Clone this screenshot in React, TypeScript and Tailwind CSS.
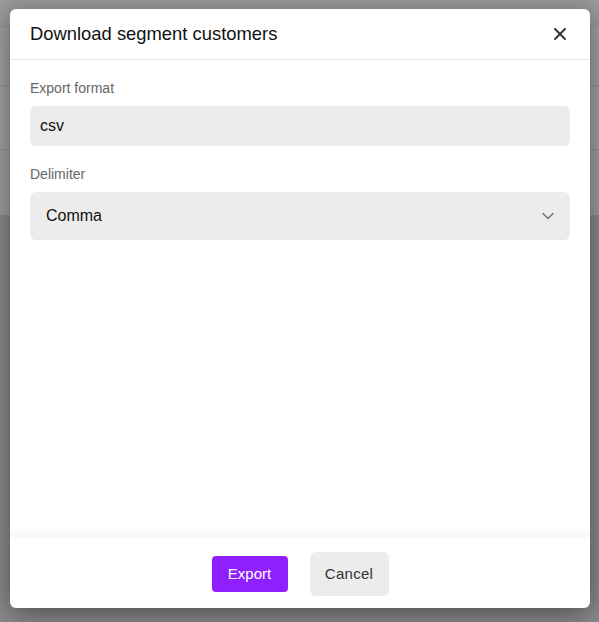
import { X, ChevronDown } from "lucide-react";

export default function App() {
  return (
    <div className="relative h-[622px] w-full overflow-hidden bg-[#8b8b8b] font-['Liberation_Sans',Arial,sans-serif]">
      {/* dimmed page underneath */}
      <div className="flex flex-col">
        <div className="h-[28px] bg-[#9b9b9b]" />
        <div className="h-[58px] border-b border-[#8f8f8f] bg-[#a2a2a2]" />
        <div className="h-[64px] border-b border-[#8f8f8f] bg-[#a2a2a2]" />
        <div className="h-[65px] bg-[#9f9f9f]" />
      </div>

      {/* dialog */}
      <div className="absolute left-[10px] top-[9px] flex h-[599px] w-[580px] flex-col overflow-hidden rounded-md bg-white shadow-[0_6px_28px_rgba(0,0,0,0.45)]">
        <div className="flex h-[51px] items-center justify-between border-b border-[#e6e6e6] px-5">
          <h2 className="text-[18.4px] text-[#111]">Download segment customers</h2>
          <button className="text-[#333]">
            <X size={20} strokeWidth={2.4} />
          </button>
        </div>

        <div className="flex flex-1 flex-col px-5 pt-[18px]">
          <label className="text-[14px] leading-5 text-[#666]">Export format</label>
          <div className="mt-2 flex h-10 items-center rounded-md bg-[#ececec] px-[10px] text-[16px] text-[#111]">
            csv
          </div>

          <label className="mt-[18px] text-[14px] leading-5 text-[#666]">Delimiter</label>
          <div className="mt-2 flex h-12 items-center justify-between rounded-md bg-[#ececec] pl-4 pr-3 text-[16px] text-[#111]">
            <span>Comma</span>
            <ChevronDown size={20} strokeWidth={1.9} className="text-[#777]" />
          </div>
        </div>

        <div className="flex h-[70px] items-center justify-center gap-[22px] pt-[2px] shadow-[0_-5px_8px_rgba(0,0,0,0.045)]">
          <button className="h-9 w-[76px] rounded bg-[#8f1fff] text-[15px] text-white">
            Export
          </button>
          <button className="h-11 w-[79px] rounded-md bg-[#ececec] text-[15px] tracking-[0.3px] text-[#333]">
            Cancel
          </button>
        </div>
      </div>
    </div>
  );
}
